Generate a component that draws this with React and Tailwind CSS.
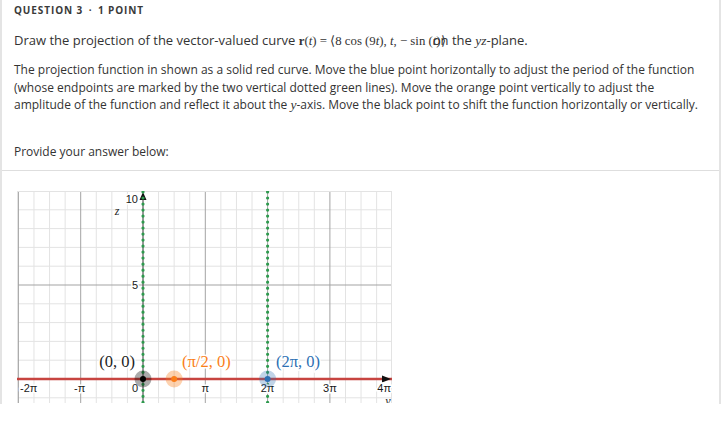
import React from 'react';

const W = 375;
const H = 212;
const OX = 126;
const OY = 188;
const PI_PX = 62.3;
const UNIT_PX = 18.8;

const Graph = () => {
  // vertical grid: every pi/4
  const vLines = [];
  for (let k = -8; k <= 16; k++) {
    vLines.push({ x: OX + (k * PI_PX) / 4, major: k % 4 === 0 });
  }
  // horizontal grid: every unit
  const hLines = [];
  for (let j = -2; j <= 10; j++) {
    hLines.push({ y: OY - j * UNIT_PX, major: j % 5 === 0 });
  }

  return (
    <svg width={W} height={H} viewBox={`0 0 ${W} ${H}`} className="block">
      <rect x="0" y="0" width={W} height={H} fill="#ffffff" />
      {vLines.filter((l) => !l.major).map((l, i) => (
        <line key={'vm' + i} x1={l.x} y1="0" x2={l.x} y2={H} stroke="#e3e3e3" strokeWidth="1" />
      ))}
      {hLines.filter((l) => !l.major).map((l, i) => (
        <line key={'hm' + i} x1="0" y1={l.y} x2={W} y2={l.y} stroke="#e3e3e3" strokeWidth="1" />
      ))}
      {vLines.filter((l) => l.major && l.x !== OX).map((l, i) => (
        <line key={'vM' + i} x1={l.x} y1="0" x2={l.x} y2={H} stroke="#a3a3a3" strokeWidth="1" />
      ))}
      {hLines.filter((l) => l.major && l.y !== OY).map((l, i) => (
        <line key={'hM' + i} x1="0" y1={l.y} x2={W} y2={l.y} stroke="#a3a3a3" strokeWidth="1" />
      ))}
      {/* outer edges */}
      <line x1="0.5" y1="0" x2="0.5" y2={H} stroke="#e3e3e3" />
      <line x1="0" y1="0.5" x2={W} y2="0.5" stroke="#e3e3e3" />
      <line x1={W - 0.5} y1="0" x2={W - 0.5} y2={H} stroke="#e3e3e3" />

      {/* y axis */}
      <line x1={OX} y1="4" x2={OX} y2={H} stroke="#333" strokeWidth="1" />
      <polygon points={`${OX},1 ${OX - 3.5},9 ${OX + 3.5},9`} fill="#111" />

      {/* red curve along the y axis */}
      <line x1="0" y1={OY} x2={W} y2={OY} stroke="#c74440" strokeWidth="2.5" />
      <polygon points={`${W - 1},${OY} ${W - 10},${OY - 3.5} ${W - 10},${OY + 3.5}`} fill="#111" />

      {/* green dotted period markers */}
      <line x1={OX} y1="1" x2={OX} y2={H} stroke="#2e9a4e" strokeWidth="3.2" strokeLinecap="round" strokeDasharray="0.01 6" />
      <line x1={OX + 2 * PI_PX} y1="1" x2={OX + 2 * PI_PX} y2={H} stroke="#2e9a4e" strokeWidth="3.2" strokeLinecap="round" strokeDasharray="0.01 6" />

      {/* tick labels */}
      <g className="font-['Liberation_Sans',Arial,sans-serif]" fontSize="11" fill="#1a1a1a" stroke="#fff" strokeWidth="3" paintOrder="stroke">
        <text x="3" y="201">-2π</text>
        <text x={OX - PI_PX - 1} y="201" textAnchor="middle">-π</text>
        <text x={OX - 5} y="201" textAnchor="end">0</text>
        <text x={OX + PI_PX} y="201" textAnchor="middle">π</text>
        <text x={OX + 2 * PI_PX} y="201" textAnchor="middle">2π</text>
        <text x={OX + 3 * PI_PX} y="201" textAnchor="middle">3π</text>
        <text x={W - 1} y="201" textAnchor="end">4π</text>
        <text x={OX - 5} y="12" textAnchor="end">10</text>
        <text x={OX - 5} y="98" textAnchor="end">5</text>
      </g>
      <g className="font-['Liberation_Serif',serif] italic" fontSize="12" fill="#222">
        <text x="100" y="24" textAnchor="middle">z</text>
        <text x={W - 4} y="214" textAnchor="middle">y</text>
      </g>

      {/* points */}
      <circle cx={OX} cy={OY} r="8.5" fill="#000" opacity="0.33" />
      <circle cx={OX} cy={OY} r="3" fill="#000" />
      <circle cx={OX + PI_PX / 2} cy={OY} r="8.5" fill="#fa7e19" opacity="0.35" />
      <circle cx={OX + PI_PX / 2} cy={OY} r="3" fill="#fa7e19" />
      <circle cx={OX + 2 * PI_PX} cy={OY} r="8.5" fill="#2d70b3" opacity="0.3" />
      <circle cx={OX + 2 * PI_PX} cy={OY} r="3" fill="#2d70b3" />

      {/* point labels */}
      <g className="font-['Liberation_Serif',serif]" fontSize="16.5" stroke="#fff" strokeWidth="3" paintOrder="stroke">
        <text x="118" y="176" textAnchor="end" fill="#222">(0, 0)</text>
        <text x="165" y="176" fill="#fa7e19">(π/2, 0)</text>
        <text x="259" y="176" fill="#2d70b3">(2π, 0)</text>
      </g>
    </svg>
  );
};

const App = () => {
  return (
    <div className="w-[722px] h-[421px] bg-white overflow-hidden text-[#333] font-['Open_Sans','Liberation_Sans',sans-serif]">
      <div className="w-[721px] h-[404px] border-l-2 border-r-2 border-[#e4e4e4]">
        <div className="px-3 pt-[4px] pb-[9px] border-b border-[#dedede]">
          <div className="text-[10px] leading-3 font-bold tracking-[0.9px] text-[#3a3a3a]">
            QUESTION 3 <span className="mx-[2px]">·</span> 1 POINT
          </div>
          <p className="mt-[15px] text-[13px] leading-[18px]">
            Draw the projection of the vector-valued curve{' '}
            <span className="text-[12.8px] font-['Liberation_Serif',serif]">
              <b>r</b>(<i>t</i>) = ⟨8 cos (9<i>t</i>), <i>t</i>, − sin (
              <span className="inline-block w-0 overflow-visible whitespace-nowrap"><i>t</i>)⟩</span>
            </span>
            <span>on the </span>
            <i className="text-[13.5px] font-['Liberation_Serif',serif]">yz</i>-plane.
          </p>
          <p className="mt-[11px] text-[12px] leading-[17.6px]">
            The projection function in shown as a solid red curve. Move the blue point horizontally to adjust the period of the function (whose endpoints are marked by the two vertical dotted green lines). Move the orange point vertically to adjust the amplitude of the function and reflect it about the{' '}
            <i className="text-[13.5px] font-['Liberation_Serif',serif]">y</i>-axis. Move the black point to shift the function horizontally or vertically.
          </p>
          <p className="mt-[29px] text-[12px] leading-[18px]">Provide your answer below:</p>
        </div>
        <div className="pl-[15px] pt-5">
          <Graph />
        </div>
      </div>
    </div>
  );
};

export default App;
